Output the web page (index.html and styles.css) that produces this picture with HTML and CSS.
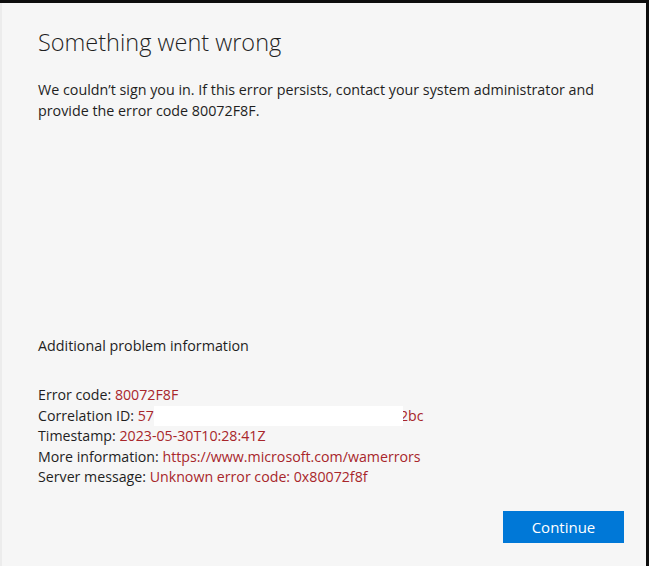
FILE: index.html
```html
<!DOCTYPE html>
<html lang="en">
<head>
    <meta charset="UTF-8">
    <meta name="viewport" content="width=device-width, initial-scale=1.0">
    <title>Something went wrong</title>
    <link rel="stylesheet" href="styles.css">
</head>
<body>
    <div class="dialog">
        <h1 class="title">Something went wrong</h1>
        <p class="message">We couldn’t sign you in. If this error persists, contact your system administrator and provide the error code 80072F8F.</p>

        <h2 class="info-title">Additional problem information</h2>

        <ul class="details">
            <li>Error code: <span class="value">80072F8F</span></li>
            <li>Correlation ID: <span class="value">57<span class="redacted"></span>2bc</span></li>
            <li>Timestamp: <span class="value">2023-05-30T10:28:41Z</span></li>
            <li>More information: <span class="value">https://www.microsoft.com/wamerrors</span></li>
            <li>Server message: <span class="value">Unknown error code: 0x80072f8f</span></li>
        </ul>

        <div class="actions">
            <button class="continue-button">Continue</button>
        </div>
    </div>
</body>
</html>
```

FILE: styles.css
```css
* {
    box-sizing: border-box;
    margin: 0;
    padding: 0;
}

body {
    background: #0d0d0d;
    font-family: "Open Sans", "Noto Sans", sans-serif;
    color: #1f1f1f;
}

.dialog {
    margin: 3px 3px 0 0;
    height: 563px;
    padding: 23px 22px 0 36px;
    background: #f6f6f6;
    border-left: 2px solid #ececec;
}

.title {
    font-size: 23.5px;
    font-weight: 300;
    line-height: 32px;
}

.message {
    margin-top: 21px;
    max-width: 570px;
    font-size: 14.3px;
    line-height: 21px;
}

.info-title {
    margin-top: 215px;
    font-size: 14.3px;
    font-weight: 400;
    line-height: 20px;
}

.details {
    margin-top: 29px;
    list-style: none;
    font-size: 14.2px;
    line-height: 20.5px;
}

.value {
    color: #a8262b;
}

.redacted {
    display: inline-block;
    width: 249px;
    height: 20px;
    margin-right: -3px;
    vertical-align: -5px;
    background: #fff;
    position: relative;
}

.actions {
    margin-top: 23px;
    display: flex;
    justify-content: flex-end;
}

.continue-button {
    width: 121px;
    height: 32px;
    border: none;
    background: #0078d7;
    color: #fff;
    font-family: inherit;
    font-size: 15px;
}
```
